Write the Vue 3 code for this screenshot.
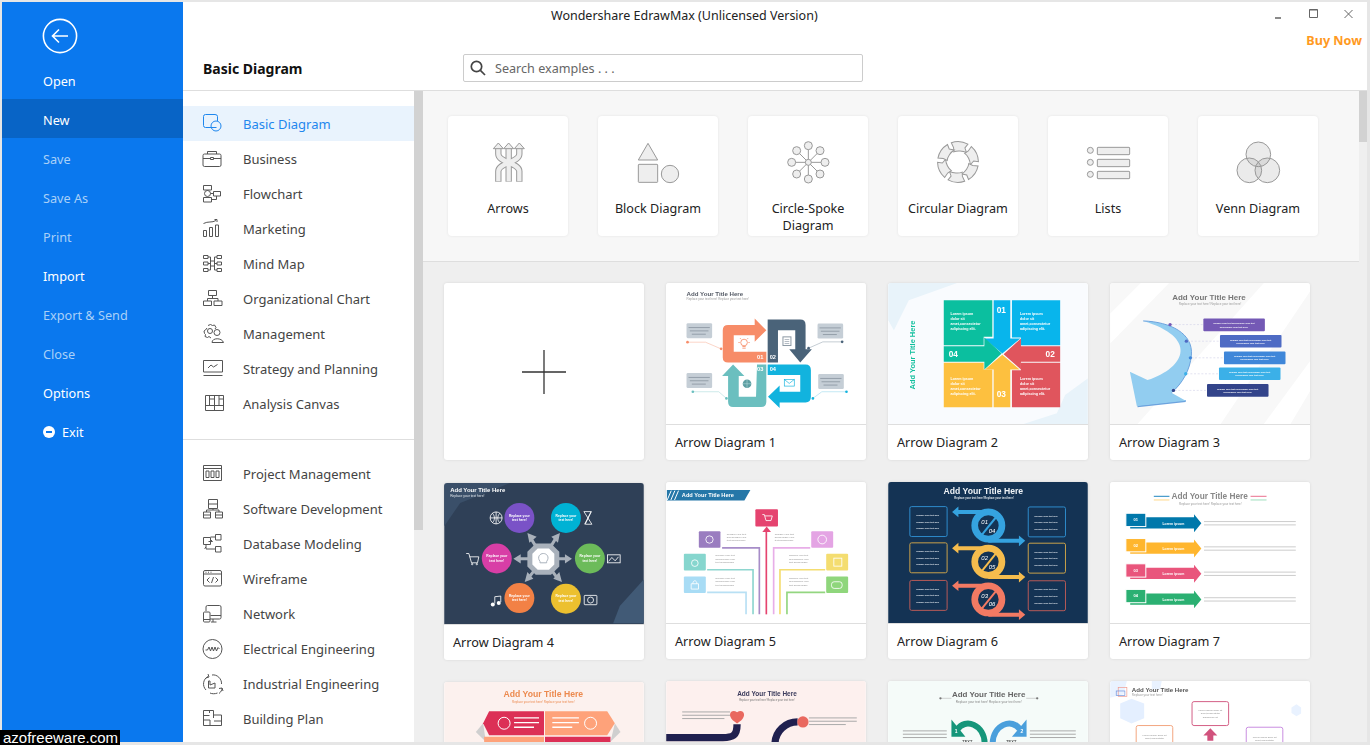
<template>
  <div class="app">
    <aside class="side">
      <div class="back">
        <svg width="36" height="36" viewBox="0 0 36 36" fill="none" stroke="#fff">
          <circle cx="18" cy="18" r="16.6" stroke-width="1.6" />
          <path d="M26 18H10.5M17 11.5L10.5 18L17 24.5" stroke-width="1.6" />
        </svg>
      </div>
      <div
        v-for="m in menu"
        :key="m.label"
        class="menu-item"
        :class="{ active: m.active, dim: m.dim }"
      >
        <span v-if="m.label === 'Exit'" class="exit-dot"></span>
        {{ m.label }}
      </div>
    </aside>

    <div class="main">
      <header class="head">
        <div class="title-row">
          <span class="app-title">Wondershare EdrawMax (Unlicensed Version)</span>
          <div class="win-btns">
            <svg width="12" height="12" viewBox="0 0 12 12"><path d="M2 9H8" stroke="#8a8a8a" stroke-width="2" /></svg>
            <svg width="12" height="12" viewBox="0 0 12 12" fill="none"><path d="M1.5 0.5H9.5V8.5H1.5ZM1.5 1H9.5" stroke="#666" /></svg>
            <svg width="12" height="12" viewBox="0 0 12 12" fill="none"><path d="M1.5 1L9.5 9M9.5 1L1.5 9" stroke="#666" /></svg>
          </div>
        </div>
        <div class="buy-row"><span class="buy">Buy Now</span></div>
        <div class="search-row">
          <span class="page-title">Basic Diagram</span>
          <div class="search">
            <svg width="18" height="18" viewBox="0 0 18 18" fill="none" stroke="#444" stroke-width="1.7">
              <circle cx="7.5" cy="7.5" r="5.2" />
              <path d="M11.4 11.4L16 16" />
            </svg>
            <span>Search examples . . .</span>
          </div>
        </div>
      </header>

      <div class="body">
        <nav class="cats">
          <div class="cat-list">
            <div class="cat-group first">
              <div v-for="c in catsTop" :key="c.label" class="cat" :class="{ active: c.active }">
                <svg class="cat-icon" width="24" height="22" viewBox="0 0 24 22"><path :d="c.icon" /></svg>
                <span>{{ c.label }}</span>
              </div>
            </div>
            <div class="cat-group">
              <div v-for="c in catsBottom" :key="c.label" class="cat">
                <svg class="cat-icon" width="24" height="22" viewBox="0 0 24 22"><path :d="c.icon" /></svg>
                <span>{{ c.label }}</span>
              </div>
            </div>
          </div>
          <div class="track"><div class="thumb cat-thumb"></div></div>
        </nav>

        <div class="content">
          <div class="content-inner">
            <section class="kinds">
              <div class="kind">
                <svg class="kind-icon" width="60" height="60" viewBox="0 0 180 180">
                  <g fill="none" stroke="#999" stroke-width="19">
                    <path d="M92 149V45" />
                    <path d="M61 149V118C61 92 124 92 124 66V45" />
                    <path d="M124 149V118C124 92 61 92 61 66V45" />
                  </g>
                  <g fill="none" stroke="#eee" stroke-width="13">
                    <path d="M92 148V45" />
                    <path d="M61 148V118C61 92 124 92 124 66V45" />
                    <path d="M124 148V118C124 92 61 92 61 66V45" />
                  </g>
                  <g class="gl">
                    <path d="M61 33L76 50H46Z" />
                    <path d="M92 33L107 50H77Z" />
                    <path d="M124 33L139 50H109Z" />
                  </g>
                </svg>
                <span>Arrows</span>
              </div>
              <div class="kind">
                <svg class="kind-icon" width="60" height="60" viewBox="0 0 180 180">
                  <g class="gl">
                    <path d="M60 34L89 84H31Z" />
                    <rect x="31" y="97" width="58" height="54" rx="2" />
                    <circle cx="126" cy="126" r="26" />
                  </g>
                </svg>
                <span>Block Diagram</span>
              </div>
              <div class="kind">
                <svg class="kind-icon" width="60" height="60" viewBox="0 0 180 180">
                  <g class="gl">
                    <path d="M91 41V141M41 91H141M56 56L126 126M126 56L56 126" />
                    <circle v-for="(s, i) in spokes" :key="i" :cx="s.x" :cy="s.y" r="12" />
                    <circle cx="91" cy="91" r="9" />
                  </g>
                </svg>
                <span>Circle-Spoke Diagram</span>
              </div>
              <div class="kind">
                <svg class="kind-icon" width="60" height="60" viewBox="0 0 180 180">
                  <g class="gl" transform="translate(90 90)">
                    <path
                      v-for="a in [0, 60, 120, 180, 240, 300]"
                      :key="a"
                      :transform="`rotate(${a + 5})`"
                      d="M-25 -56A62 62 0 0 1 25 -56L17 -44L23 -30C12 -35 -6 -35 -15 -29L-17 -42Z"
                    />
                  </g>
                </svg>
                <span>Circular Diagram</span>
              </div>
              <div class="kind">
                <svg class="kind-icon" width="60" height="60" viewBox="0 0 180 180">
                  <g class="gl">
                    <circle cx="37" cy="55" r="9" />
                    <circle cx="37" cy="91" r="9" />
                    <circle cx="37" cy="127" r="9" />
                    <rect x="58" y="46" width="97" height="22" rx="2" />
                    <rect x="58" y="82" width="97" height="22" rx="2" />
                    <rect x="58" y="118" width="97" height="22" rx="2" />
                  </g>
                </svg>
                <span>Lists</span>
              </div>
              <div class="kind">
                <svg class="kind-icon" width="60" height="60" viewBox="0 0 180 180">
                  <g fill="#8f8f8f" fill-opacity="0.18" stroke="#999" stroke-width="3">
                    <circle cx="91" cy="67" r="37" />
                    <circle cx="64" cy="115" r="37" />
                    <circle cx="118" cy="115" r="37" />
                  </g>
                </svg>
                <span>Venn Diagram</span>
              </div>
            </section>

            <section class="gallery">
              <div class="col">
                <div class="card blank">
                  <svg width="44" height="44" viewBox="0 0 44 44"><path d="M0 22H44M22 0V44" stroke="#333" stroke-width="1.3" /></svg>
                </div>

                <div class="card shifted">
                  <svg class="shot" viewBox="0 0 600 424">
                    <g transform="translate(-12 -10)">
                      <rect x="12" y="10" width="600" height="424" fill="#2f4057" />
                      <path d="M12 10H210L60 70L12 140Z" fill="#3a4f69" />
                      <path d="M612 300V432H520L540 380Z" fill="#415a76" />
                      <text x="30" y="36" class="t" font-size="18" fill="#fff">Add Your Title Here</text>
                      <text x="30" y="51" font-size="10" fill="#dfe5ea">Replace your text here!</text>
                      <g stroke="#a9b1bb" stroke-width="9" fill="#a9b1bb">
                        <path d="M310 238L270 172M310 238L350 172M310 238L385 238M310 238L355 300M310 238L262 300M310 238L232 238" />
                      </g>
                      <path d="M262 160L290 172L268 190ZM360 160L334 172L354 190ZM396 238L375 224V252ZM366 308L340 298L358 278ZM254 308L280 298L262 278ZM220 238L242 224V252Z" fill="#a9b1bb" />
                      <path d="M287 192H333L358 217V261L333 286H287L262 261V217Z" fill="#a9b1bb" />
                      <path d="M293 207H327L343 223V255L327 271H293L277 255V223Z" fill="#fff" />
                      <path d="M300 250V246C290 232 300 222 310 222C320 222 330 232 320 246V250Z" fill="none" stroke="#aab2bc" stroke-width="3" />
                      <g v-for="b in bubbles" :key="b.c">
                        <circle :cx="b.x" :cy="b.y" r="45" :fill="b.c" />
                        <text :x="b.x" :y="b.y - 4" class="t mid" font-size="10" fill="#fff">Replace your</text>
                        <text :x="b.x" :y="b.y + 10" class="t mid" font-size="10" fill="#fff">text here!</text>
                      </g>
                      <g fill="none" stroke="#fff" stroke-width="2.5">
                        <circle cx="168" cy="115" r="18" />
                        <path d="M150 115H186M168 97V133M157 101C165 110 165 122 157 129M179 101C171 110 171 122 179 129" />
                        <path d="M432 96H454L436 134H456ZM454 96L434 134" />
                        <path d="M78 222H86L94 250H112L116 232H88" />
                        <circle cx="96" cy="254" r="2" />
                        <circle cx="110" cy="254" r="2" />
                        <rect x="503" y="226" width="38" height="24" />
                        <path d="M506 246L516 234L526 244L536 232" />
                        <path d="M164 372V352L182 350V368" />
                        <rect x="433" y="348" width="38" height="28" rx="2" />
                        <circle cx="452" cy="362" r="9" />
                      </g>
                      <circle cx="158" cy="375" r="6" fill="#fff" />
                      <circle cx="176" cy="371" r="6" fill="#fff" />
                    </g>
                  </svg>
                  <div class="name">Arrow Diagram 4</div>
                </div>

                <div class="card">
                  <svg class="shot" viewBox="0 0 600 424">
                    <rect width="600" height="424" fill="#fcf1ee" />
                    <text x="298" y="44" class="t mid" font-size="26" fill="#ec8a4f">Add Your Title Here</text>
                    <text x="298" y="62" class="mid" font-size="9" fill="#ec8a4f">Replace your text here!  Replace your text here!</text>
                    <path d="M95 150L117 124L125 180Z" fill="#cfcfcf" />
                    <path d="M530 150L513 124L500 180Z" fill="#cfcfcf" />
                    <path d="M135 88H300V160H135L117 124Z" fill="#dc3056" />
                    <path d="M303 88H490L513 124L490 160H303Z" fill="#fea27a" />
                    <path d="M120 165H300V240H120Z" fill="#fea27a" />
                    <path d="M303 165H500V240H303Z" fill="#dc3056" />
                    <circle cx="180" cy="124" r="18" fill="none" stroke="#fff" stroke-width="3" />
                    <circle cx="440" cy="124" r="18" fill="none" stroke="#fff" stroke-width="3" />
                    <path d="M210 108H285M210 122H285M210 136H270M325 108H405M325 122H405M325 136H385" stroke="#fff" stroke-width="4" />
                  </svg>
                </div>
              </div>

              <div class="col">
                <div class="card">
                  <svg class="shot" viewBox="0 0 600 424">
                    <g transform="translate(-17 -8)">
                      <rect x="17" y="8" width="600" height="424" fill="#fff" />
                      <text x="78" y="46" class="t" font-size="18.5" fill="#555b66">Add Your Title Here</text>
                      <text x="78" y="60" font-size="9" fill="#999">Replace your text here!   Replace your text here!</text>
                      <path d="M203 134H283V115L318 150L283 185V165H220V215H318V247H203Q187 247 187 232V150Q187 134 203 134Z" fill="#f78c68" />
                      <path d="M322 118H420Q436 118 436 134V207H455L420 247L387 207H405V150H353V247H322Z" fill="#4a6379" />
                      <path d="M290 253H318V365Q318 381 302 381H218Q203 381 203 365V288H185L218 253L252 288H235V350H287Z" fill="#6bbfbf" />
                      <path d="M322 253H436Q452 253 452 270V350Q452 367 436 367H358V384L323 350L358 316V335H420V285H322Z" fill="#12b3de" />
                      <g class="t" font-size="17" fill="#fff">
                        <text x="290" y="237">01</text>
                        <text x="328" y="237">02</text>
                        <text x="290" y="272">03</text>
                        <text x="328" y="272">04</text>
                      </g>
                      <g fill="none" stroke="#f78c68" stroke-width="2.5">
                        <circle cx="251" cy="187" r="10" />
                        <path d="M246 199H256M246 204H256M234 187H238M264 187H268M239 174L242 177M263 174L260 177" />
                      </g>
                      <rect x="368" y="170" width="24" height="26" fill="#fff" stroke="#8c99a4" stroke-width="3" />
                      <path d="M373 178H387M373 184H387M373 190H387" stroke="#8c99a4" stroke-width="2" />
                      <circle cx="260" cy="311" r="13" fill="#5d9ea2" />
                      <path d="M247 311H273M260 298V324" stroke="#bfe3e3" stroke-width="1.5" />
                      <rect x="372" y="298" width="30" height="20" fill="#fff" stroke="#12b3de" stroke-width="2" />
                      <path d="M372 298L387 310L402 298" fill="none" stroke="#12b3de" stroke-width="2" />
                      <g fill="#c5ced6">
                        <rect x="78" y="129" width="77" height="45" rx="4" />
                        <rect x="472" y="130" width="77" height="45" rx="4" />
                        <rect x="78" y="279" width="77" height="45" rx="4" />
                        <rect x="474" y="282" width="77" height="45" rx="4" />
                      </g>
                      <path d="M84 142H148M88 152H144M94 162H136M478 143H542M482 153H538M488 163H530M84 292H148M88 302H144M94 312H136M480 295H544M484 305H540M490 315H532" stroke="#7b8894" stroke-width="2" />
                      <path d="M80 186H135L182 206" fill="none" stroke="#f9c0ac" stroke-width="2" />
                      <path d="M546 185H488L445 204" fill="none" stroke="#a7b3be" stroke-width="2" />
                      <path d="M97 335H175L198 355" fill="none" stroke="#b5dfdf" stroke-width="2" />
                      <path d="M559 335H485L458 355" fill="none" stroke="#a6def0" stroke-width="2" />
                      <circle cx="81" cy="186" r="4" fill="#f78c68" />
                      <circle cx="182" cy="206" r="4" fill="#f78c68" />
                      <circle cx="546" cy="185" r="4" fill="#4a6379" />
                      <circle cx="445" cy="204" r="4" fill="#4a6379" />
                      <circle cx="97" cy="335" r="4" fill="#6bbfbf" />
                      <circle cx="198" cy="355" r="4" fill="#6bbfbf" />
                      <circle cx="559" cy="335" r="4" fill="#12b3de" />
                      <circle cx="458" cy="355" r="4" fill="#12b3de" />
                    </g>
                  </svg>
                  <div class="name">Arrow Diagram 1</div>
                </div>

                <div class="card">
                  <svg class="shot" viewBox="0 0 600 424">
                    <g transform="translate(-677 -6)">
                      <rect x="677" y="6" width="600" height="424" fill="#fff" />
                      <path d="M679 30H930L912 62H679Z" fill="#2577a8" />
                      <path d="M692 32L680 60M703 32L691 60M714 32L702 60" stroke="#fff" stroke-width="3" />
                      <text x="724" y="52" class="t" font-size="17" fill="#fff">Add Your Title Here</text>
                      <g fill="none" stroke-width="5">
                        <path d="M917 404V338H800" stroke="#b8e0f4" />
                        <path d="M938 404V270H800" stroke="#8ed6cf" />
                        <path d="M957 404V204H845" stroke="#a78dc8" />
                        <path d="M978 404V150" stroke="#e5436f" />
                        <path d="M1000 404V204H1110" stroke="#e8aee8" />
                        <path d="M1019 404V270H1155" stroke="#f4dd70" />
                        <path d="M1040 404V338H1155" stroke="#93d680" />
                      </g>
                      <path d="M966 156L979 140L992 156Z" fill="#e5436f" />
                      <rect x="945" y="88" width="68" height="52" rx="3" fill="#e5436f" />
                      <rect x="775" y="154" width="65" height="50" rx="3" fill="#9a7dc0" />
                      <rect x="1113" y="154" width="66" height="50" rx="3" fill="#e4a4e4" />
                      <rect x="730" y="222" width="66" height="50" rx="3" fill="#86d6ce" />
                      <rect x="1158" y="222" width="66" height="50" rx="3" fill="#f4dd70" />
                      <rect x="730" y="290" width="66" height="50" rx="3" fill="#a8dcf5" />
                      <rect x="1158" y="290" width="66" height="50" rx="3" fill="#8fd67c" />
                      <g fill="none" stroke="#fff" stroke-width="2.5">
                        <path d="M966 104H972L977 122H992L996 108H974" />
                        <circle cx="807" cy="179" r="11" />
                        <circle cx="1146" cy="179" r="13" />
                        <circle cx="763" cy="250" r="10" />
                        <rect x="1181" y="235" width="24" height="24" />
                        <path d="M752 328V312H774V328ZM757 312C757 300 769 300 769 312" />
                        <rect x="1174" y="306" width="32" height="20" rx="8" />
                      </g>
                      <g font-size="7.5" fill="#8a8a8a">
                        <text x="859" y="164">Replace your text</text>
                        <text x="859" y="173">hereReplace your</text>
                        <text x="859" y="182">text hereReplace</text>
                        <text x="1003" y="164">Replace your text</text>
                        <text x="1003" y="173">hereReplace your</text>
                        <text x="1003" y="182">text hereReplace</text>
                        <text x="825" y="230">Replace your text</text>
                        <text x="825" y="240">hereReplace your</text>
                        <text x="825" y="250">text hereReplace</text>
                        <text x="1046" y="230">Replace your text</text>
                        <text x="1046" y="240">hereReplace your</text>
                        <text x="1046" y="250">text hereReplace</text>
                        <text x="825" y="298">Replace your text</text>
                        <text x="825" y="308">hereReplace your</text>
                        <text x="825" y="318">text hereReplace</text>
                        <text x="1046" y="298">Replace your text</text>
                        <text x="1046" y="308">hereReplace your</text>
                        <text x="1046" y="318">text hereReplace</text>
                      </g>
                    </g>
                  </svg>
                  <div class="name">Arrow Diagram 5</div>
                </div>

                <div class="card">
                  <svg class="shot" viewBox="0 0 600 424">
                    <rect width="600" height="424" fill="#fdf0ee" />
                    <text x="303" y="46" class="t mid" font-size="19.5" fill="#3b3b5c">Add Your Title Here</text>
                    <text x="303" y="60" class="mid" font-size="8" fill="#777">Replace your text here!  Replace your text here!</text>
                    <path d="M48 93H192M48 103H192M48 113H175M429 111H573M429 121H573M429 131H540" stroke="#aaa" stroke-width="3" />
                    <path d="M0 170H170C200 170 213 165 213 130M327 190C327 150 360 123 395 123" fill="none" stroke="#20204f" stroke-width="22" />
                    <path d="M200 118C182 100 197 82 213 94C229 82 244 100 226 118L213 128Z" fill="#e9685f" />
                    <circle cx="411" cy="123" r="17" fill="#e9685f" />
                  </svg>
                </div>
              </div>

              <div class="col">
                <div class="card">
                  <svg class="shot" viewBox="0 0 600 424">
                    <g transform="translate(-683 -8)">
                      <rect x="683" y="8" width="600" height="424" fill="#f9fbfe" />
                      <path d="M683 8H890L745 60L700 150L683 120Z" fill="#e8f3fa" />
                      <path d="M1283 295V432H1090L1190 400L1215 345Z" fill="#e8f3fa" />
                      <text transform="translate(762 328) rotate(-90)" class="t" font-size="22.5" fill="#12bf9d">Add Your Title Here</text>
                      <path d="M850 60H996V170H970V195H850Z" fill="#0bbf9f" />
                      <path d="M1055 60H1200V195H1082V172H1055Z" fill="#08b5ec" />
                      <path d="M1000 60H1050V175H1080L1026 220L972 175H1000Z" fill="#08b5ec" />
                      <path d="M1200 198V245H1082V268L1030 222L1082 175V198Z" fill="#e0555d" />
                      <path d="M1082 270V248H1200V382H1055V270Z" fill="#e0555d" />
                      <path d="M850 248H970V268H996V382H850Z" fill="#fdc03f" />
                      <path d="M1000 382V268H974L1026 224L1078 268H1050V382Z" fill="#fdc03f" />
                      <path d="M850 198H972V172L1024 220L972 268V245H850Z" fill="#0bbf9f" />
                      <g class="t" font-size="25" fill="#fff">
                        <text x="1009" y="97">01</text>
                        <text x="1156" y="231">02</text>
                        <text x="1009" y="351">03</text>
                        <text x="865" y="231">04</text>
                      </g>
                      <g class="t" font-size="11" fill="#fff">
                        <text x="870" y="104">Lorem ipsum</text>
                        <text x="870" y="119">dolor sit</text>
                        <text x="870" y="134">amet,consectetur</text>
                        <text x="870" y="149">adipiscing elit.</text>
                        <text x="1079" y="104">Lorem ipsum</text>
                        <text x="1079" y="119">dolor sit</text>
                        <text x="1079" y="134">amet,consectetur</text>
                        <text x="1079" y="149">adipiscing elit.</text>
                        <text x="870" y="301">Lorem ipsum</text>
                        <text x="870" y="316">dolor sit</text>
                        <text x="870" y="331">amet,consectetur</text>
                        <text x="870" y="346">adipiscing elit.</text>
                        <text x="1079" y="301">Lorem ipsum</text>
                        <text x="1079" y="316">dolor sit</text>
                        <text x="1079" y="331">amet,consectetur</text>
                        <text x="1079" y="346">adipiscing elit.</text>
                      </g>
                    </g>
                  </svg>
                  <div class="name">Arrow Diagram 2</div>
                </div>

                <div class="card">
                  <svg class="shot" viewBox="0 0 600 424">
                    <g transform="translate(-24 -7)">
                      <rect x="24" y="7" width="600" height="424" fill="#143354" />
                      <text x="310" y="42" class="t mid" font-size="26" fill="#eef2f6">Add Your Title Here</text>
                      <text x="312" y="57" class="t mid" font-size="8" fill="#dfe5ea">Replace your text here!   Replace your text here!</text>
                      <g v-for="l in loops" :key="l.c">
                        <rect x="89" :y="l.y - 54" width="112" height="90" rx="5" fill="none" :stroke="l.box" stroke-width="3" />
                        <rect x="445" :y="l.y - 53" width="112" height="90" rx="5" fill="none" :stroke="l.box" stroke-width="3" />
                        <g class="t" font-size="6.5" fill="#e8edf2">
                          <text x="108" :y="l.y - 26">Replace your text here</text>
                          <text x="108" :y="l.y - 6">Replace your text here</text>
                          <text x="108" :y="l.y + 14">Replace your text here</text>
                          <text x="464" :y="l.y - 24">Replace your text here</text>
                          <text x="464" :y="l.y - 4">Replace your text here</text>
                          <text x="464" :y="l.y + 16">Replace your text here</text>
                        </g>
                        <path :d="`M232 ${l.y - 38}H325M325 ${l.y + 49}H420`" :stroke="l.c" stroke-width="12" fill="none" />
                        <path :d="`M216 ${l.y - 38}L235 ${l.y - 54}V${l.y - 22}ZM436 ${l.y + 49}L417 ${l.y + 33}V${l.y + 65}Z`" :fill="l.c" />
                        <circle cx="325" :cy="l.y + 3" r="41" fill="#143354" :stroke="l.c" stroke-width="20" />
                        <path :d="`M306 ${l.y + 30}L348 ${l.y - 22}`" :stroke="l.c" stroke-width="6" />
                        <text x="304" :y="l.y - 2" font-size="18" font-style="italic" fill="#fff">{{ l.a }}</text>
                        <text x="326" :y="l.y + 24" font-size="18" font-style="italic" fill="#fff">{{ l.b }}</text>
                      </g>
                    </g>
                  </svg>
                  <div class="name">Arrow Diagram 6</div>
                </div>

                <div class="card">
                  <svg class="shot" viewBox="0 0 600 424">
                    <rect width="600" height="424" fill="#f5fbf9" />
                    <text x="302" y="49" class="t mid" font-size="24" fill="#666">Add Your Title Here</text>
                    <text x="302" y="66" class="mid" font-size="9.5" fill="#888">Replace your text here!   Replace your text here!</text>
                    <path d="M157 52H190M415 52H448" stroke="#bbb" stroke-width="2" />
                    <circle cx="157" cy="52" r="3.5" fill="#777" />
                    <circle cx="448" cy="52" r="3.5" fill="#777" />
                    <path d="M208 146C230 110 290 130 290 190" fill="none" stroke="#15967a" stroke-width="18" />
                    <path d="M190 116V168H232Z" fill="#15967a" />
                    <text x="204" y="156" class="t mid" font-size="15" fill="#fff">1</text>
                    <path d="M396 146C374 110 314 130 314 190" fill="none" stroke="#4a9fdc" stroke-width="18" />
                    <path d="M416 116V168H372Z" fill="#4a9fdc" />
                    <text x="402" y="156" class="t mid" font-size="15" fill="#fff">2</text>
                    <text x="238" y="185" class="t mid" font-size="12" fill="#555">TEXT</text>
                    <text x="370" y="185" class="t mid" font-size="12" fill="#555">TEXT</text>
                    <path d="M44 150H176M44 160H176M44 170H176M426 150H564M426 160H564M426 170H564" stroke="#aaa" stroke-width="3" />
                  </svg>
                </div>
              </div>

              <div class="col">
                <div class="card">
                  <svg class="shot" viewBox="0 0 600 424">
                    <g transform="translate(-28 -8)">
                      <rect x="28" y="8" width="603" height="424" fill="#f8f8f8" />
                      <path d="M28 100L120 8H205L28 190ZM110 432L490 8H631V30L360 432ZM490 432L631 240V330L570 432Z" fill="#fff" />
                      <text x="325" y="58" class="t mid" font-size="24" fill="#777">Add Your Title Here</text>
                      <text x="328" y="73" class="mid" font-size="9" fill="#999">Replace your text here!   Replace your text here!</text>
                      <path d="M110 382L255 366L255 360L110 376Z" fill="#6ca3de" />
                      <path d="M127 122C210 125 278 160 272 225C268 270 245 310 212 338L255 362L108 378L87 275L140 300C260 260 290 170 127 122Z" fill="#92cdf0" />
                      <path d="M127 122C210 125 278 160 272 225C268 270 245 310 212 338" fill="none" stroke="#6ca3de" stroke-width="3" />
                      <path d="M212 133H308M260 183H358M272 233H370M258 281H355M222 331H319" stroke="#d5d5ea" stroke-width="2" stroke-dasharray="6 5" />
                      <circle cx="208" cy="133" r="5" fill="#7459b5" />
                      <circle cx="257" cy="183" r="5" fill="#4e6bc4" />
                      <circle cx="269" cy="233" r="5" fill="#3f87d9" />
                      <circle cx="255" cy="281" r="5" fill="#3bb0e8" />
                      <circle cx="218" cy="331" r="5" fill="#33448a" />
                      <g v-for="b in listBoxes" :key="b.c">
                        <rect :x="b.x" :y="b.y" width="185" height="38" rx="3" :fill="b.c" />
                        <text :x="b.x + 92" :y="b.y + 17" class="t mid" font-size="6.5" fill="#fff">Replace your text hereReplace your text</text>
                        <text :x="b.x + 92" :y="b.y + 27" class="t mid" font-size="6.5" fill="#fff">hereReplace your text here!</text>
                      </g>
                    </g>
                  </svg>
                  <div class="name">Arrow Diagram 3</div>
                </div>

                <div class="card">
                  <svg class="shot" viewBox="0 0 600 424">
                    <g transform="translate(-688 -6)">
                      <rect x="688" y="6" width="600" height="424" fill="#fff" />
                      <text x="987" y="58" class="t mid" font-size="25" fill="#888">Add Your Title Here</text>
                      <text x="989" y="75" class="mid" font-size="9" fill="#999">Replace your text here!   Replace your text here!</text>
                      <path d="M819 49H866" stroke="#1f86c0" stroke-width="3" />
                      <path d="M819 60H866" stroke="#ffd98a" stroke-width="3" />
                      <path d="M1110 49H1158" stroke="#ea6f8e" stroke-width="3" />
                      <path d="M1110 60H1158" stroke="#9fe0be" stroke-width="3" />
                      <g v-for="r in rows" :key="r.c">
                        <path :d="`M748 ${r.y + 12}H940V${r.y + 3}L962 ${r.y + 30}L940 ${r.y + 57}V${r.y + 46}H748Z`" :fill="r.c" />
                        <rect x="735" :y="r.y" width="60" height="40" :fill="r.c" stroke="#fff" stroke-width="3" />
                        <text x="765" :y="r.y + 24" class="t mid" font-size="12" fill="#fff">{{ r.n }}</text>
                        <text x="878" :y="r.y + 34" class="t mid" font-size="10.5" fill="#fff">Lorem ipsum</text>
                        <path :d="`M970 ${r.y + 25}H1246M970 ${r.y + 35}H1246`" stroke="#ccc" stroke-width="3" />
                      </g>
                    </g>
                  </svg>
                  <div class="name">Arrow Diagram 7</div>
                </div>

                <div class="card">
                  <svg class="shot" viewBox="0 0 600 424">
                    <rect width="600" height="424" fill="#fff" />
                    <path d="M64 53L102 68V112L64 128L30 112V68Z" fill="#e4efff" />
                    <path d="M0 0H50L40 40L0 50ZM125 0H155L150 25H125ZM560 70L574 80V98L560 106L545 96V80Z" fill="#e9f2ff" />
                    <rect x="24" y="20" width="26" height="26" fill="none" stroke="#f0978b" stroke-width="2" />
                    <rect x="18" y="30" width="26" height="14" fill="none" stroke="#6a8fdc" stroke-width="2" />
                    <text x="65" y="32" class="t" font-size="18.5" fill="#555">Add Your Title Here</text>
                    <text x="65" y="44" font-size="9" fill="#999">Replace your text here!</text>
                    <rect x="246" y="62" width="110" height="72" rx="6" fill="#fff" stroke="#d45f86" stroke-width="3" />
                    <rect x="78" y="134" width="110" height="72" rx="6" fill="#fff" stroke="#f3a67f" stroke-width="3" />
                    <rect x="409" y="139" width="110" height="72" rx="6" fill="#fff" stroke="#c98ee0" stroke-width="3" />
                    <path d="M301 142L322 164H310V180H292V164H280Z" fill="#d1527d" />
                    <g class="mid" font-size="7.5" fill="#888">
                      <text x="301" y="90">Lorem ipsum dolor sit</text>
                      <text x="301" y="100">amet,consectetur</text>
                      <text x="301" y="110">adipiscing elit</text>
                      <text x="133" y="165">Lorem ipsum dolor sit</text>
                      <text x="133" y="175">amet,consectetur</text>
                      <text x="464" y="170">Lorem ipsum dolor sit</text>
                      <text x="464" y="180">amet,consectetur</text>
                    </g>
                  </svg>
                </div>
              </div>
            </section>
          </div>
          <div class="track wide"><div class="thumb main-thumb"></div></div>
        </div>
      </div>
    </div>

    <div class="mark">azofreeware.com</div>
  </div>
</template>

<script setup>
const menu = [
  { label: 'Open' },
  { label: 'New', active: true },
  { label: 'Save', dim: true },
  { label: 'Save As', dim: true },
  { label: 'Print', dim: true },
  { label: 'Import' },
  { label: 'Export & Send', dim: true },
  { label: 'Close', dim: true },
  { label: 'Options' },
  { label: 'Exit' }
]

// small helpers so each category icon is one path string
const box = (x, y, w, h) => `M${x} ${y}h${w}v${h}h${-w}z`
const ring = (x, y, r) => `M${x - r} ${y}a${r} ${r} 0 1 0 ${r * 2} 0a${r} ${r} 0 1 0 ${-r * 2} 0z`

const catsTop = [
  {
    label: 'Basic Diagram',
    active: true,
    icon: 'M15.5 14.5H4.5Q2.5 14.5 2.5 12.5V3.5Q2.5 1.5 4.5 1.5H14Q16.5 1.5 16.5 3.5V8 ' + ring(15, 13, 5)
  },
  {
    label: 'Business',
    icon: 'M6.5 6V3.5H15.5V6M3.5 6H18.5Q20 6 20 7.5V17Q20 18.5 18.5 18.5H3.5Q2 18.5 2 17V7.5Q2 6 3.5 6ZM2 10.5H9.5M12.5 10.5H20M9.5 9.5H12.5V11.5H9.5Z'
  },
  {
    label: 'Flowchart',
    icon: box(2.5, 2.5, 8, 4.5) + ring(6.5, 10.5, 3) + box(2.5, 14.5, 8, 4.5) + box(12.5, 8.5, 7, 4.5) + 'M6.5 7V7.5M9.5 10.5H12.5M10.5 16.5H15.5V13'
  },
  {
    label: 'Marketing',
    icon: box(2.5, 12.5, 3, 6) + box(8.5, 9.5, 3, 9) + box(14.5, 7, 3, 11.5) + 'M2.5 5.5C7 3 11 5 15 2.5M13.5 1.5H16V4'
  },
  {
    label: 'Mind Map',
    icon:
      box(2.5, 2.5, 4.5, 3) + box(2.5, 9, 4.5, 3) + box(2.5, 15.5, 4.5, 3) +
      box(16, 2.5, 4.5, 3) + box(16, 9, 4.5, 3) + box(16, 15.5, 4.5, 3) +
      box(9.5, 8, 4, 5) + 'M7 4H9.5V8M7 10.5H9.5M7 17H9.5V13M16 4H13.5V8M16 10.5H13.5M16 17H13.5V13'
  },
  {
    label: 'Organizational Chart',
    icon: box(7.5, 2.5, 8, 5) + box(2.5, 13, 8, 4.5) + box(13, 13, 8, 4.5) + 'M11.5 7.5V10.5M6.5 13V10.5H17V13'
  },
  {
    label: 'Management',
    icon:
      'M7 2.5L9.5 1.5L11.5 2.5L13.5 2L15 4.5L14 6M6 5L4.5 7L3 8L3.5 10.5L4.5 11.5L4 13.5L6.5 14.5L8 13.5L10 15' +
      ring(9, 8, 2.5) + ring(16, 9.5, 3) + 'M11 19.5C11 14.5 21 14.5 22.5 19.5Z'
  },
  {
    label: 'Strategy and Planning',
    icon: box(2.5, 2.5, 19, 11.5) + 'M2.5 17.5H21.5M7 10L10 7L12.5 9L16.5 6.5'
  },
  {
    label: 'Analysis Canvas',
    icon: box(4.5, 2.5, 18, 15) + 'M4.5 12.5H22.5M8.5 2.5V12.5M13.5 2.5V12.5M18 2.5V12.5M13.5 12.5V17.5M8.5 6H13.5M18 6H22.5'
  }
]

const catsBottom = [
  {
    label: 'Project Management',
    icon: box(2.5, 2.5, 18, 15) + 'M2.5 5.5H20.5' + box(5, 8, 3, 6.5) + box(10, 8, 3, 6.5) + box(15, 8, 3, 6.5)
  },
  {
    label: 'Software Development',
    icon: box(7.5, 1.5, 9, 9) + 'M7.5 6H16.5M12 10.5V12M5.5 14V12H18V14' + box(2.5, 14, 7, 6) + 'M2.5 17H9.5' + box(14.5, 14, 7, 6) + 'M14.5 17H21.5'
  },
  {
    label: 'Database Modeling',
    icon: box(2.5, 4.5, 7, 7) + box(14.5, 1.5, 5.5, 5.5) + box(14.5, 13.5, 5.5, 5.5) + 'M9.5 4H14.5M5 11.5V16H14.5M7.5 8.5H11.5L10 7M5 14L3.5 15.5'
  },
  {
    label: 'Wireframe',
    icon: 'M4 2.5H19Q20.5 2.5 20.5 4V16.5Q20.5 18 19 18H4Q2.5 18 2.5 16.5V4Q2.5 2.5 4 2.5ZM2.5 6H20.5M4.5 4.2H5.5M7 4.2H8M9.5 4.2H10.5M8.5 9.5L6 12L8.5 14.5M14.5 9.5L17 12L14.5 14.5M12.5 9L10.5 15'
  },
  {
    label: 'Network',
    icon: 'M5 8V4Q5 2.5 6.5 2.5H18.5Q20 2.5 20 4V14.5Q20 16 18.5 16H9M9.5 12.5H20M12 16V19M10 19H15.5M3.5 9H8Q9 9 9 10V18Q9 19 8 19H3.5Q2.5 19 2.5 18V10Q2.5 9 3.5 9ZM2.5 16.5H9'
  },
  {
    label: 'Electrical Engineering',
    icon: ring(11.5, 11, 9.5) + 'M4.5 12L6.5 12L8 9L9.5 13L11 9L12.5 13L14 9L15.5 13L17 9.5L18.5 11'
  },
  {
    label: 'Industrial Engineering',
    icon:
      'M5 17C1 13 2 6 7 3.5M7 1L8 4L5 5M11 2C16 1 21 6 20.5 11M16.5 20C14 21 11 21 9 20M18 20.5C20 19 21 17 21 15M18 15.5L21 15L22 18' +
      'M7.5 15V8H9V12L14 10V15Z'
  },
  {
    label: 'Building Plan',
    icon: 'M2.5 2.5H12.5V7H20.5V17.5H2.5ZM2.5 7.5H8.5M8.5 2.5V5M2.5 12H9V17.5M12.5 7V10M13 13H20.5'
  }
]

// spoke positions for the circle-spoke tile
const spokes = [
  [0, -50], [35, -35], [50, 0], [35, 35], [0, 50], [-35, 35], [-50, 0], [-35, -35]
].map(([x, y]) => ({ x: 91 + x, y: 91 + y }))

const bubbles = [
  { x: 238, y: 115, c: '#7a52c7' },
  { x: 378, y: 115, c: '#00b2d4' },
  { x: 450, y: 237, c: '#6cbb5a' },
  { x: 378, y: 358, c: '#ecc02f' },
  { x: 238, y: 356, c: '#f28145' },
  { x: 170, y: 237, c: '#d83ea6' }
]

const loops = [
  { y: 135, c: '#35a3e0', box: '#2e8ccc', a: '01', b: '04' },
  { y: 244, c: '#f5bc4d', box: '#c9a24a', a: '02', b: '05' },
  { y: 357, c: '#f37a63', box: '#b85a58', a: '03', b: '06' }
]

const listBoxes = [
  { x: 308, y: 115, c: '#7459b5' },
  { x: 358, y: 164, c: '#4e6bc4' },
  { x: 370, y: 214, c: '#3f87d9' },
  { x: 355, y: 262, c: '#3bb0e8' },
  { x: 319, y: 312, c: '#33448a' }
]

const rows = [
  { y: 100, c: '#0078ab', n: '01' },
  { y: 176, c: '#ffb62e', n: '02' },
  { y: 252, c: '#e9557c', n: '03' },
  { y: 329, c: '#2bb072', n: '04' }
]
</script>

<style>
html, body {
  margin: 0;
  overflow: hidden;
}
</style>

<style scoped>
.app {
  position: relative;
  box-sizing: border-box;
  display: flex;
  width: 1370px;
  height: 745px;
  padding: 2px 3px 3px 2px;
  overflow: hidden;
  background: #e6e6e6;
  font-family: "Noto Sans", "Open Sans", sans-serif;
  font-size: 13px;
  color: #444;
}

.side {
  flex: 0 0 181px;
  background: #0a78ee;
  color: #fff;
  font-size: 12.7px;
}

.back {
  height: 58px;
  padding-left: 39.5px;
  padding-top: 16px;
  box-sizing: border-box;
}

.back svg {
  display: block;
}

.menu-item {
  display: flex;
  align-items: center;
  box-sizing: border-box;
  height: 39px;
  padding: 2px 0 0 41px;
}

.menu-item.active {
  background: #0864c6;
}

.menu-item.dim {
  color: #a9d0f8;
}

.exit-dot {
  position: relative;
  width: 12px;
  height: 12px;
  margin-right: 7px;
  border-radius: 50%;
  background: #fff;
}

.exit-dot::after {
  content: "";
  position: absolute;
  left: 3px;
  top: 5px;
  width: 6px;
  height: 2px;
  background: #0a78ee;
}

.main {
  flex: 1;
  display: flex;
  flex-direction: column;
  min-width: 0;
}

.head {
  flex: 0 0 89px;
  box-sizing: border-box;
  background: #fff;
  border-bottom: 1px solid #dedede;
}

.title-row {
  display: flex;
  align-items: center;
  height: 26px;
}

.app-title {
  margin-left: 368px;
  font-size: 12.5px;
  color: #222;
}

.win-btns {
  display: flex;
  gap: 23px;
  margin-left: auto;
  margin-right: 12px;
  margin-top: -1px;
}

.win-btns svg {
  display: block;
}

.buy-row {
  display: flex;
  justify-content: flex-end;
  height: 26px;
  line-height: 26px;
  padding-right: 5px;
}

.buy {
  font-size: 12.6px;
  font-weight: 700;
  color: #ff9a1f;
}

.search-row {
  display: flex;
  align-items: center;
  height: 28px;
  padding-left: 20px;
}

.page-title {
  width: 260px;
  font-size: 14px;
  font-weight: 700;
  color: #111;
}

.search {
  display: flex;
  align-items: center;
  gap: 8px;
  box-sizing: border-box;
  width: 400px;
  height: 28px;
  padding-left: 5px;
  border: 1px solid #ccc;
  border-radius: 2px;
  font-size: 12.6px;
  color: #666;
}

.body {
  flex: 1;
  display: flex;
  min-height: 0;
}

.cats {
  flex: 0 0 240px;
  display: flex;
  background: #fff;
}

.cat-list {
  flex: 1;
  min-width: 0;
  overflow: hidden;
}

.cat-group {
  padding: 16px 0 0;
}

.cat-group.first {
  padding: 15px 0 18px;
  border-bottom: 1px solid #dedede;
}

.cat {
  display: flex;
  align-items: center;
  height: 35px;
  padding-left: 18px;
}

.cat.active {
  background: #e9f3fd;
  color: #1f87ee;
}

.cat-icon {
  flex: none;
  width: 24px;
  height: 22px;
  margin-right: 18px;
  fill: none;
  stroke: #555;
  stroke-width: 1;
}

.cat.active .cat-icon {
  stroke: #1f87ee;
}

.track {
  flex: 0 0 9px;
  background: #efefef;
}

.track.wide {
  flex-basis: 8px;
}

.thumb {
  background: #d2d2d2;
}

.cat-thumb {
  height: 439px;
}

.main-thumb {
  height: 51px;
}

.content {
  flex: 1;
  display: flex;
  min-width: 0;
}

.content-inner {
  flex: 1;
  min-width: 0;
  overflow: hidden;
  background: #efefef;
}

.kinds {
  display: flex;
  gap: 30px;
  box-sizing: border-box;
  height: 171px;
  padding: 25px 0 0 25px;
  background: #f7f7f7;
  border-bottom: 1px solid #dedede;
}

.kind {
  display: flex;
  flex-direction: column;
  align-items: center;
  box-sizing: border-box;
  width: 120px;
  height: 120px;
  padding: 16px 8px 0;
  border-radius: 4px;
  background: #fff;
  box-shadow: 0 0 3px rgba(0, 0, 0, 0.08);
  text-align: center;
  font-size: 12.6px;
  line-height: 17px;
  color: #222;
}

.kind-icon {
  flex: none;
  margin-bottom: 8px;
}

.gl {
  fill: #eee;
  stroke: #999;
  stroke-width: 3;
}

.gallery {
  display: flex;
  gap: 22px;
  padding: 21px 0 0 21px;
}

.col {
  display: flex;
  flex-direction: column;
  gap: 22px;
  flex: 0 0 200px;
}

.card {
  flex: none;
  width: 200px;
  height: 177px;
  overflow: hidden;
  border-radius: 3px;
  background: #fff;
  box-shadow: 0 0 3px rgba(0, 0, 0, 0.1);
}

.card.blank {
  display: flex;
  align-items: center;
  justify-content: center;
}

.card.shifted {
  margin-top: 1px;
}

.shot {
  display: block;
  width: 200px;
  height: 141px;
  font-family: "Liberation Sans", sans-serif;
  filter: blur(0.3px);
}

.shot .t {
  font-weight: 700;
}

.shot .mid {
  text-anchor: middle;
}

.name {
  box-sizing: border-box;
  height: 36px;
  line-height: 35px;
  padding-left: 9px;
  border-top: 1px solid #dedede;
  font-size: 12.7px;
  color: #222;
}

.mark {
  position: absolute;
  left: 0;
  bottom: 0;
  width: 120px;
  height: 15px;
  line-height: 15px;
  padding-left: 3px;
  box-sizing: border-box;
  background: #000;
  color: #fff;
  font-family: "Liberation Sans", sans-serif;
  font-size: 15px;
  white-space: nowrap;
}
</style>
